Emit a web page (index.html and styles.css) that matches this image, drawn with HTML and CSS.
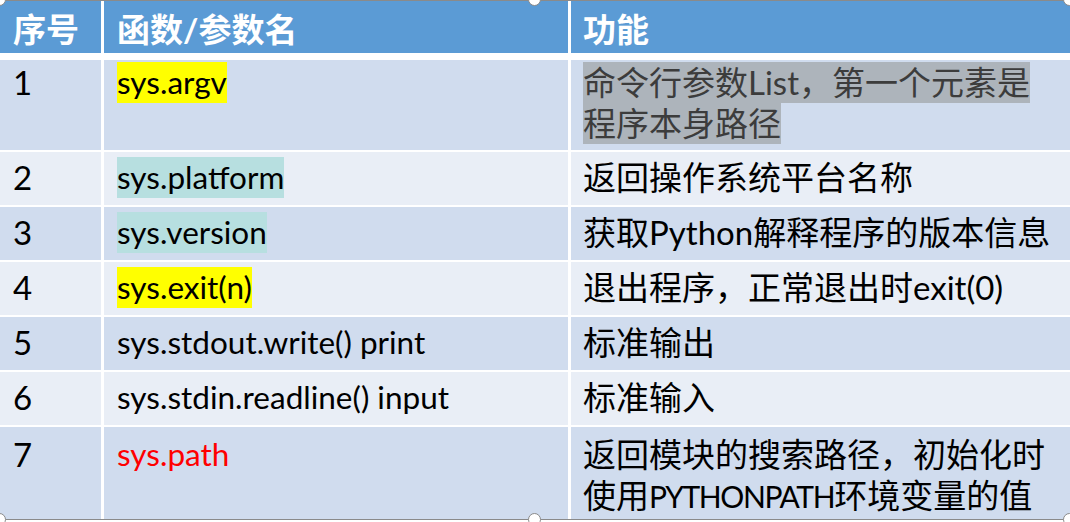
FILE: index.html
```html
<!DOCTYPE html>
<html lang="zh-CN">
<head>
<meta charset="utf-8">
<title>sys 模块</title>
<link rel="stylesheet" href="styles.css">
</head>
<body>
<div class="frame">
  <table class="tbl">
    <thead>
      <tr>
        <th class="c1">序号</th>
        <th class="c2">函数/参数名</th>
        <th class="c3">功能</th>
      </tr>
    </thead>
    <tbody>
      <tr class="odd tall first">
        <td>1</td>
        <td class="code"><span class="hl yellow">sys.argv</span></td>
        <td class="greytext"><span class="hl grey">命令行参数List，第一个元素是</span><br><span class="hl grey">程序本身路径</span></td>
      </tr>
      <tr class="even">
        <td>2</td>
        <td class="code"><span class="hl teal">sys.platform</span></td>
        <td>返回操作系统平台名称</td>
      </tr>
      <tr class="odd">
        <td>3</td>
        <td class="code"><span class="hl teal">sys.version</span></td>
        <td>获取Python解释程序的版本信息</td>
      </tr>
      <tr class="even">
        <td>4</td>
        <td class="code"><span class="hl yellow">sys.exit(n)</span></td>
        <td>退出程序，正常退出时exit(0)</td>
      </tr>
      <tr class="odd">
        <td>5</td>
        <td class="code">sys.stdout.write() print</td>
        <td>标准输出</td>
      </tr>
      <tr class="even">
        <td>6</td>
        <td class="code">sys.stdin.readline() input</td>
        <td>标准输入</td>
      </tr>
      <tr class="odd tall last">
        <td>7</td>
        <td class="code"><span class="red">sys.path</span></td>
        <td>返回模块的搜索路径，初始化时<br>使用<span class="caps">PYTHONPATH</span>环境变量的值</td>
      </tr>
    </tbody>
  </table>
  <span class="handle h-tl"></span>
  <span class="handle h-tm"></span>
  <span class="handle h-tr"></span>
  <span class="handle h-bl"></span>
  <span class="handle h-bm"></span>
  <span class="handle h-br"></span>
</div>
</body>
</html>
```

FILE: styles.css
```css
html, body {
  margin: 0;
  padding: 0;
  background: #ffffff;
}

body {
  width: 1070px;
  height: 522px;
  overflow: hidden;
  font-family: Lato, "Noto Sans CJK SC", "Noto Sans", sans-serif;
}

.frame {
  position: relative;
  width: 1070px;
  border-top: 1px solid #8a8a8a;
  border-bottom: 1px solid #8a8a8a;
}

.tbl {
  width: 1070px;
  table-layout: fixed;
  border-collapse: separate;
  border-spacing: 0;
  font-size: 33px;
  line-height: 41px;
  color: #000000;
}

.tbl th,
.tbl td {
  box-sizing: border-box;
  padding: 5px 8px 0 13px;
  text-align: left;
  vertical-align: top;
  white-space: nowrap;
  border-right: 3px solid #ffffff;
}

.tbl th:last-child,
.tbl td:last-child {
  border-right: none;
  padding-left: 12px;
}

.tbl th {
  height: 52px;
  padding-top: 8px;
  background: #5b9bd5;
  color: #ffffff;
  font-weight: 700;
}

.c1 { width: 104px; }
.c2 { width: 467px; }
.c3 { width: 499px; }

.tbl td {
  height: 55px;
  border-top: 2px solid #ffffff;
}

.tbl td.code {
  font-size: 31.5px;
}

.tbl tr.first td {
  height: 97px;
  border-top: 7px solid #ffffff;
  padding-top: 2px;
}

.tbl tr.last td {
  height: 94px;
  padding-top: 7px;
}

.odd td { background: #d0dcee; }
.even td { background: #e9eef6; }

.hl {
  display: inline-block;
  line-height: 41px;
  vertical-align: top;
}

.caps {
  font-size: 30px;
  letter-spacing: -1.4px;
}

.yellow { background: #ffff00; }
.teal { background: #b7dfe0; }
.grey { background: #adb4bb; }

.greytext { color: #3c3c3c; }

.red { color: #ff0000; }

.handle {
  position: absolute;
  width: 13px;
  height: 13px;
  border-radius: 50%;
  background: #ffffff;
  border: 1px solid #8a8a8a;
  box-sizing: border-box;
}

.h-tl { left: -7px; top: -8px; }
.h-tm { left: 528px; top: -8px; }
.h-tr { left: 1063px; top: -8px; }
.h-bl { left: -7px; bottom: -7px; }
.h-bm { left: 528px; bottom: -7px; }
.h-br { left: 1063px; bottom: -7px; }
```
